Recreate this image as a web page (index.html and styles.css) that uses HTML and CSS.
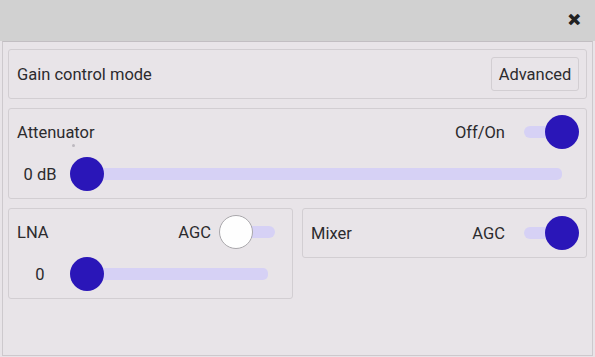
FILE: index.html
```html
<!DOCTYPE html>
<html>
<head>
<meta charset="utf-8">
<link rel="stylesheet" href="styles.css">
</head>
<body>
<div class="header">
  <span class="close">&#x2715;</span>
</div>
<div class="panel">
  <div class="card row-card">
    <span class="label">Gain control mode</span>
    <button class="btn">Advanced</button>
  </div>
  <div class="card stack-card">
    <div class="row">
      <span class="label">Attenuator</span>
      <div class="right">
        <span class="label">Off/On</span>
        <div class="toggle on"><div class="track"></div><div class="knob"></div></div>
      </div>
    </div>
    <div class="row">
      <span class="value">0 dB</span>
      <div class="slider"><div class="strack"></div><div class="knob"></div></div>
    </div>
    <span class="dot"></span>
  </div>
  <div class="cols">
    <div class="card stack-card">
      <div class="row">
        <span class="label">LNA</span>
        <div class="right">
          <span class="label">AGC</span>
          <div class="toggle off"><div class="track"></div><div class="knob"></div></div>
        </div>
      </div>
      <div class="row">
        <span class="value">0</span>
        <div class="slider"><div class="strack"></div><div class="knob"></div></div>
      </div>
    </div>
    <div class="card row-card mixer">
      <span class="label">Mixer</span>
      <div class="right">
        <span class="label">AGC</span>
        <div class="toggle on"><div class="track"></div><div class="knob"></div></div>
      </div>
    </div>
  </div>
</div>
</body>
</html>
```
FILE: styles.css
```css
* { box-sizing: border-box; }
html, body { margin: 0; padding: 0; }
body {
  width: 595px;
  height: 357px;
  background: #e8e4e8;
  font-family: Roboto, "Noto Sans", sans-serif;
  font-size: 16.5px;
  color: #2c2b2e;
  overflow: hidden;
}
.header {
  height: 41px;
  background: #d1d1d1;
  display: flex;
  justify-content: flex-end;
  align-items: center;
  padding-right: 14px;
}
.close {
  font-size: 15px;
  font-weight: bold;
  color: #222;
  line-height: 1;
  -webkit-text-stroke: 1.4px #222;
}
.panel {
  margin: 0 2px;
  height: 315px;
  border: 1px solid #cdc9cd;
  border-top: 1px solid #c2bec2;
  padding: 7px 5px;
  display: flex;
  flex-direction: column;
  gap: 9px;
}
.card {
  border: 1px solid #d2ced2;
  border-radius: 3px;
  position: relative;
}
.row-card {
  display: flex;
  align-items: center;
  justify-content: space-between;
  padding: 7px 7px 7px 8px;
  height: 50px;
}
.stack-card {
  display: flex;
  flex-direction: column;
  gap: 8px;
  padding: 6px 7px 7px 8px;
}
.row {
  display: flex;
  align-items: center;
  justify-content: space-between;
  height: 34px;
}
.right {
  display: flex;
  align-items: center;
  gap: 8px;
}
.btn {
  font-family: Roboto, "Noto Sans", sans-serif;
  font-size: 16.5px;
  color: #2c2b2e;
  background: #e8e4e8;
  border: 1px solid #d2ced2;
  border-radius: 3px;
  height: 34px;
  width: 88px;
  padding: 0;
}
.toggle {
  position: relative;
  width: 66px;
  height: 34px;
}
.toggle .track {
  position: absolute;
  left: 11px;
  right: 10px;
  top: 11px;
  height: 12px;
  border-radius: 6px;
  background: #d6d1f5;
}
.toggle .knob {
  position: absolute;
  top: 0;
}
.toggle.on .knob { right: 0; }
.toggle.off .knob {
  left: 0;
  background: #fefefe;
  border: 1px solid #a9a7ab;
}
.knob {
  width: 34px;
  height: 34px;
  border-radius: 50%;
  background: #2a16b8;
}
.value {
  width: 46px;
  text-align: center;
}
.slider {
  flex: 1;
  position: relative;
  height: 34px;
  margin-left: 7px;
  margin-right: 17px;
  display: flex;
  align-items: center;
}
.strack {
  position: absolute;
  left: 0;
  right: 0;
  top: 11px;
  height: 12px;
  border-radius: 5px;
  background: #d6d1f5;
}
.slider .knob {
  position: relative;
}
.dot {
  position: absolute;
  left: 63px;
  top: 35px;
  width: 3px;
  height: 3px;
  border-radius: 50%;
  background: #bdb9c0;
}
.cols {
  display: grid;
  grid-template-columns: 285px 285px;
  gap: 9px;
  align-items: start;
}
```
